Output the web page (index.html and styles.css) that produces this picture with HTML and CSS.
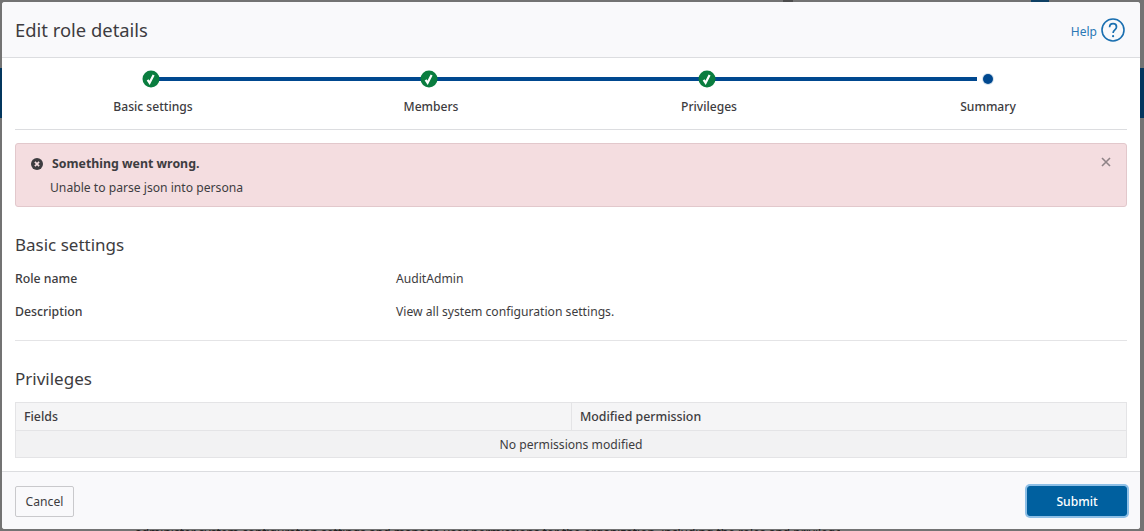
FILE: index.html
```html
<!DOCTYPE html>
<html lang="en">
<head>
<meta charset="utf-8">
<title>Edit role details</title>
<link rel="stylesheet" href="styles.css">
</head>
<body>
<div class="backdrop">
  <div class="page-band"></div>
  <div class="page-bump page-bump-grey"></div>
  <div class="page-bump page-bump-blue"></div>
  <div class="page-text">administer system configuration settings and manage user permissions for the organization, including the roles and privileges assigned to each member of the team</div>
</div>
<div class="modal">
  <header class="modal-head">
    <h1 class="modal-title">Edit role details</h1>
    <a class="help"><span class="help-text">Help</span>
      <svg class="help-icon" viewBox="0 0 24 24" width="24" height="24"><circle cx="12" cy="12" r="11" fill="none" stroke="#1a6fb0" stroke-width="1.6"/><path d="M8.6 9.2c0-2.1 1.5-3.5 3.5-3.5s3.4 1.3 3.4 3.2c0 2.9-3.4 2.9-3.4 6" fill="none" stroke="#1a6fb0" stroke-width="1.7"/><circle cx="12.1" cy="18.2" r="1.1" fill="#1a6fb0"/></svg>
    </a>
  </header>
  <div class="modal-body">
    <div class="stepper">
      <div class="step done">
        <span class="dot"><svg viewBox="0 0 18 18" width="18" height="18"><circle cx="9" cy="9" r="8.5" fill="#0a7d3f"/><path d="M5.6 9.8l2 3 4-7.8" fill="none" stroke="#fff" stroke-width="2.2"/></svg></span>
        <span class="label">Basic settings</span>
      </div>
      <div class="step done">
        <span class="dot"><svg viewBox="0 0 18 18" width="18" height="18"><circle cx="9" cy="9" r="8.5" fill="#0a7d3f"/><path d="M5.6 9.8l2 3 4-7.8" fill="none" stroke="#fff" stroke-width="2.2"/></svg></span>
        <span class="label">Members</span>
      </div>
      <div class="step done">
        <span class="dot"><svg viewBox="0 0 18 18" width="18" height="18"><circle cx="9" cy="9" r="8.5" fill="#0a7d3f"/><path d="M5.6 9.8l2 3 4-7.8" fill="none" stroke="#fff" stroke-width="2.2"/></svg></span>
        <span class="label">Privileges</span>
      </div>
      <div class="step current">
        <span class="dot"><span class="dot-inner"></span></span>
        <span class="label">Summary</span>
      </div>
    </div>
    <div class="alert">
      <div class="alert-title">
        <svg class="alert-icon" viewBox="0 0 12 12" width="12" height="12"><circle cx="6" cy="6" r="6" fill="#3d3c40"/><path d="M3.9 3.9l4.2 4.2M8.1 3.9l-4.2 4.2" stroke="#f4dde0" stroke-width="1.7"/></svg>
        <strong>Something went wrong.</strong>
      </div>
      <p class="alert-text">Unable to parse json into persona</p>
      <svg class="alert-close" viewBox="0 0 10 10" width="10" height="10"><path d="M1 1l8 8M9 1l-8 8" stroke="#8f8387" stroke-width="1.6"/></svg>
    </div>
    <section class="section">
      <h2 class="section-title">Basic settings</h2>
      <div class="row"><div class="row-key">Role name</div><div class="row-val">AuditAdmin</div></div>
      <div class="row"><div class="row-key">Description</div><div class="row-val">View all system configuration settings.</div></div>
    </section>
    <section class="section-priv">
      <h2 class="section-title">Privileges</h2>
      <div class="table">
        <div class="th">Fields</div>
        <div class="th th-last">Modified permission</div>
        <div class="empty">No permissions modified</div>
      </div>
    </section>
  </div>
  <footer class="modal-foot">
    <button class="btn btn-cancel">Cancel</button>
    <button class="btn btn-submit">Submit</button>
  </footer>
</div>
</body>
</html>
```
FILE: styles.css
```css
* { box-sizing: border-box; }
html, body { margin: 0; height: 100%; }
body {
  width: 1144px;
  height: 531px;
  overflow: hidden;
  position: relative;
  background: #737373;
  font-family: "Noto Sans", "Open Sans", sans-serif;
  font-size: 12.15px;
  color: #3d3c40;
}
.backdrop { height: 531px; position: relative; overflow: hidden; }
.page-band { position: absolute; left: 0; right: 0; top: 68px; height: 50px; background: #03365e; }
.page-bump { position: absolute; top: 0; height: 2px; }
.page-bump-grey { left: 783px; width: 10px; background: #4c4c4c; }
.page-bump-blue { left: 1031px; width: 18px; background: #0e3f63; }
.page-text { position: absolute; left: 135px; top: 524px; color: #222; font-size: 12px; white-space: nowrap; max-width: 705px; overflow: hidden; }
.modal {
  position: absolute;
  left: 2px;
  top: 2px;
  width: 1138px;
  height: 527px;
  background: #fff;
  border-radius: 3px;
  display: flex;
  flex-direction: column;
}
.modal-head {
  height: 56px;
  flex: none;
  background: #f9f9fb;
  border-bottom: 1px solid #dcdde0;
  border-radius: 3px 3px 0 0;
  display: flex;
  align-items: center;
  justify-content: space-between;
  padding: 0 15px 0 13px;
}
.modal-title { margin: 0; font-size: 18.4px; font-weight: 400; color: #3d3c40; }
.help { display: flex; align-items: center; gap: 4px; color: #2a78b5; font-size: 12px; }
.help-text { padding-top: 3px; }
.help-icon { display: block; }
.modal-body { flex: 1; padding: 0 13px; min-height: 0; }
.stepper {
  display: grid;
  grid-template-columns: 278px 278px 278px 278px;
  justify-content: space-between;
  height: 72px;
  border-bottom: 1px solid #dcdde0;
}
.step { position: relative; display: flex; flex-direction: column; align-items: center; padding-top: 12px; }
.dot { width: 18px; height: 18px; display: flex; align-items: center; justify-content: center; position: relative; z-index: 1; }
.step.done .dot { transform: translateX(-3px); }
.dot svg { display: block; }
.dot-inner { width: 10px; height: 10px; border-radius: 50%; background: #00488f; box-shadow: 0 0 0 1px #d4e2ee; }
.step.done::after {
  content: "";
  position: absolute;
  top: 19px;
  left: calc(50% - 3px);
  width: 100%;
  height: 4px;
  background: #00488f;
}
.step:nth-child(3)::after { width: 270px; }
.label { margin-top: 11px; font-size: 12.1px; font-weight: 500; line-height: 16px; color: #3d3c40; }
.step.done .label { transform: translateX(-1px); }
.alert {
  position: relative;
  margin-top: 13px;
  height: 64px;
  background: #f4dde0;
  border: 1px solid #e2c8cc;
  border-radius: 3px;
  padding: 10px 16px 0 15px;
}
.alert-title { display: flex; align-items: center; gap: 9px; line-height: 20px; }
.alert-title strong { font-size: 12.35px; font-weight: 700; color: #3d3c40; }
.alert-icon { display: block; }
.alert-text { margin: 5px 0 0 19px; font-size: 12.15px; line-height: 18px; }
.alert-close { position: absolute; right: 15px; top: 13px; }
.section { margin-top: 25px; height: 109px; border-bottom: 1px solid #e4e4e6; }
.section-title { margin: 0; font-size: 17px; font-weight: 400; line-height: 26px; color: #3d3c40; }
.row { display: flex; height: 33px; align-items: center; }
.row-key { width: 381px; font-weight: 500; font-size: 12.3px; }
.section .row:first-of-type { margin-top: 4px; }
.section-priv { margin-top: 25px; }
.table {
  margin-top: 10px;
  display: grid;
  grid-template-columns: 1fr 1fr;
  background: #f2f2f3;
  border: 1px solid #e4e4e6;
}
.th { height: 28px; background: #f5f5f6; border-bottom: 1px solid #e4e4e6; font-weight: 500; font-size: 12.35px; padding: 0 8px; line-height: 27px; }
.th-last { border-left: 1px solid #e4e4e6; }
.empty { grid-column: 1 / 3; height: 26px; line-height: 28px; text-align: center; }
.modal-foot {
  height: 58px;
  flex: none;
  background: #f9f9fb;
  border-top: 1px solid #dcdde0;
  display: flex;
  align-items: center;
  justify-content: space-between;
  padding: 1px 13px 0;
  border-radius: 0 0 3px 3px;
}
.btn { font: inherit; border-radius: 2px; cursor: pointer; }
.btn-cancel { width: 59px; height: 31px; background: #f9f9fb; border: 1px solid #c9c9cc; color: #3d3c40; }
.btn-submit { width: 100px; height: 30px; background: #00609f; border: 1px solid #00609f; color: #fff; font-weight: 500; box-shadow: 0 0 0 2px #8dbfe6; border-radius: 3px; }
```
